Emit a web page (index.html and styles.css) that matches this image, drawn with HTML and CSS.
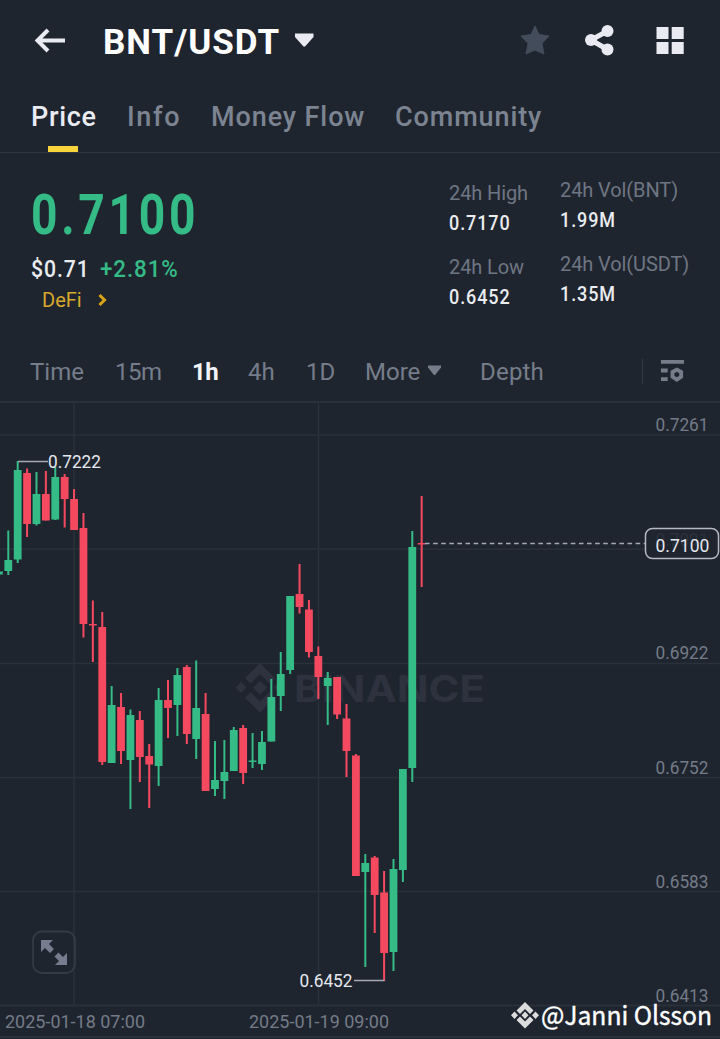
FILE: index.html
```html
<!DOCTYPE html>
<html lang="en">
  <head>
    <meta charset="UTF-8" />
    <meta name="viewport" content="width=device-width, initial-scale=1.0" />
    <title>BNT/USDT</title>
    <link rel="stylesheet" href="styles.css" />
  </head>
  <body>
    <header class="topbar">
      <svg class="back" width="32" height="26" viewBox="0 0 32 26">
        <path d="M14 2 L3.500 12.500 L14 23 M4 12.500 H31" />
      </svg>
      <h1 class="pair"><span>BNT/USDT</span></h1>
      <svg class="caret" width="19" height="15" viewBox="0 0 19 15">
        <path d="M0 .5H18.500V4L10.500 13Q9.250 14.500 8 13L0 4Z" />
      </svg>
      <div class="actions">
        <svg width="32" height="32" viewBox="0 0 32 32">
          <path class="star" d="M15 1l4 8.500 10 1.500-7 7.500 2 10.500L15 25 6 29l2-10.500L1 11 11 9.500z" />
        </svg>
        <svg width="30" height="32" viewBox="0 0 30 32">
          <path class="link" d="M22.500 6 L6 15 L22.500 24.500" />
          <g class="light">
            <circle cx="6" cy="15" r="6" />
            <circle cx="22.500" cy="6" r="6" />
            <circle cx="22.500" cy="24.500" r="6" />
          </g>
        </svg>
        <svg width="28" height="28" viewBox="0 0 28 28">
          <path class="light" d="M.5 0h12v12H.5zM15.700 0h12v12h-12zM.5 15h12v12H.5zM15.700 15h12v12h-12z" />
        </svg>
      </div>
    </header>

    <nav class="tabs">
      <a class="tab active">Price</a>
      <a class="tab info">Info</a>
      <a class="tab flow">Money Flow</a>
      <a class="tab community">Community</a>
    </nav>

    <section class="ticker">
      <div class="quote">
        <div class="last"><span>0.7100</span></div>
        <div class="change"><b>$0.71</b><span>+2.81%</span></div>
        <div class="tag">
          DeFi
          <svg width="9" height="14" viewBox="0 0 9 14"><path d="M1.500 2l5 5-5 5" /></svg>
        </div>
      </div>
      <dl class="stats">
        <div><dt>24h High</dt><dd>0.7170</dd></div>
        <div><dt>24h Low</dt><dd>0.6452</dd></div>
      </dl>
      <dl class="stats volume">
        <div><dt>24h Vol(BNT)</dt><dd>1.99M</dd></div>
        <div><dt>24h Vol(USDT)</dt><dd>1.35M</dd></div>
      </dl>
    </section>

    <nav class="intervals">
      <a class="time">Time</a>
      <a class="m15">15m</a>
      <a class="h1 active">1h</a>
      <a class="h4">4h</a>
      <a class="d1">1D</a>
      <a class="more">More <svg width="13" height="11" viewBox="0 0 13 11"><path d="M0 .5h13v2L7.500 9.500q-1 1-2 0L0 2.500z" /></svg></a>
      <a class="depth">Depth</a>
      <svg class="settings" width="26" height="26" viewBox="0 0 26 26">
        <path class="fill" d="M1 1h24v4H1zM1 10h7v4H1zM1 19h7v4H1z" />
        <path class="nut" d="M17.500 11l4.500 2.500v5L17.500 21.500l-4.500-3v-5z" />
      </svg>
    </nav>

    <main class="chart">
      <svg id="chart" width="720" height="638" viewBox="0 401 720 638">
        <g class="grid">
          <path class="edge" d="M0 402H720M0 1005.500H720M0 1037H720" />
          <path d="M0 435H720M0 549H720M0 663.500H720M0 777.500H720M0 891.500H720" />
          <path d="M74 402V1005M318.500 402V1005" />
        </g>
        <g class="watermark">
          <path d="M260 663l15 15-5.500 5.500L260 674l-9.500 9.500L245 678zM260 712.500l15-15-5.500-5.500L260 701.500l-9.500-9.500-5.500 5.500zM241 682l5.500 5.500L241 693l-5.500-5.500zM279 682l5.500 5.500L279 693l-5.500-5.500zM260 681l7 6.700-7 6.700-7-6.700z" />
          <text x="294" y="701.500" textLength="191" lengthAdjust="spacingAndGlyphs">BINANCE</text>
        </g>
        <g id="candles"></g>
        <path class="pointer" d="M18 461.500H48M354 980.500H384.500" />
        <path class="current" d="M425 543.500H645" />
        <g class="axis">
          <text x="655.500" y="431" textLength="53" lengthAdjust="spacingAndGlyphs">0.7261</text>
          <text x="655.500" y="659" textLength="53" lengthAdjust="spacingAndGlyphs">0.6922</text>
          <text x="655.500" y="774" textLength="53" lengthAdjust="spacingAndGlyphs">0.6752</text>
          <text x="655.500" y="888" textLength="53" lengthAdjust="spacingAndGlyphs">0.6583</text>
          <text x="655.500" y="1002" textLength="53" lengthAdjust="spacingAndGlyphs">0.6413</text>
          <text x="5" y="1028" textLength="140" lengthAdjust="spacingAndGlyphs">2025-01-18 07:00</text>
          <text x="249" y="1028" textLength="140" lengthAdjust="spacingAndGlyphs">2025-01-19 09:00</text>
        </g>
        <rect class="price-box" x="645.500" y="528.500" width="73" height="30" rx="7" />
        <text class="covered" x="655.500" y="545.500" textLength="53" lengthAdjust="spacingAndGlyphs">0.7091</text>
        <g class="marks">
          <text x="48" y="468" textLength="53" lengthAdjust="spacingAndGlyphs">0.7222</text>
          <text x="299.500" y="987" textLength="53" lengthAdjust="spacingAndGlyphs">0.6452</text>
          <text x="655.500" y="552" textLength="54" lengthAdjust="spacingAndGlyphs">0.7100</text>
        </g>
        <rect class="expand" x="33" y="931.500" width="42" height="41.500" rx="9" />
        <path class="arrows" d="M41 940h12l-4 4 5 5-4 4-5-5-4 4zM67 965H55l4-4-4.500-4.500 4-4L63 957l4-4z" />
        <g class="credit">
          <path d="M525 1002l8.500 8.500-3.500 3.500-5-5-5 5-3.500-3.500zM525 1028.500l8.500-8.500-3.500-3.500-5 5-5-5-3.500 3.500zM514.500 1011.500l3.500 3.700-3.500 3.700-3.500-3.700zM535.500 1011.500l3.500 3.700-3.500 3.700-3.500-3.700zM525 1011.500l3.500 3.700-3.500 3.700-3.500-3.700z" />
          <text x="541" y="1024.500" textLength="171" lengthAdjust="spacingAndGlyphs">@Janni Olsson</text>
        </g>
      </svg>
    </main>
    <script src="chart.js"></script>
  </body>
</html>
```
FILE: styles.css
```css
* {
  box-sizing: border-box;
}
body {
  margin: 0;
  width: 720px;
  height: 1039px;
  overflow: hidden;
  background: #1f252f;
  color: #eaecef;
  font-family: Roboto, "Liberation Sans", sans-serif;
}
svg {
  display: block;
  flex: none;
}

/* top bar */
.topbar {
  display: flex;
  align-items: center;
  height: 80px;
  padding: 1px 36px 0 34px;
}
.back {
  fill: none;
  stroke: #eaebf2;
  stroke-width: 4;
}
.pair {
  width: 178px;
  margin: 3px 0 0 37px;
  color: #fff;
  font-size: 35px;
  font-weight: 700;
  letter-spacing: 1px;
  white-space: nowrap;
}
.caret {
  margin-left: 14px;
  fill: #eaebf2;
}
.actions {
  display: flex;
  align-items: center;
  gap: 33px;
  margin-left: auto;
}
.actions svg:nth-child(3) {
  margin-left: 8px;
}
.star {
  fill: #434c5a;
  stroke: #434c5a;
  stroke-linejoin: round;
}
.light {
  fill: #eaebf2;
}
.link {
  fill: none;
  stroke: #eaebf2;
  stroke-width: 5;
}
.actions svg {
  overflow: visible;
}

/* page tabs */
.tabs {
  display: flex;
  height: 73px;
  padding-left: 31px;
  border-bottom: 1px solid #303640;
  color: #7c8491;
  font-size: 27px;
  font-weight: 500;
  letter-spacing: 0.9px;
  line-height: 74px;
  white-space: nowrap;
}
.tab {
  width: 96px;
}
.tab.active {
  display: flex;
  flex-direction: column;
  justify-content: space-between;
  color: #eaecf4;
  letter-spacing: 0.7px;
}
.tab.active::after {
  content: "";
  width: 30px;
  height: 6px;
  margin: -8px 0 0 17px;
  background: #f8d33a;
}
.info {
  width: 84px;
  letter-spacing: 1.7px;
}
.flow {
  width: 184px;
}
.community {
  width: 160px;
}

/* last price and 24h stats */
.ticker {
  display: flex;
  height: 188px;
  white-space: nowrap;
}
.quote {
  width: 449px;
  padding: 29px 0 0 31px;
}
.last {
  height: 65px;
  color: #35bb86;
  font-size: 56px;
  font-weight: 700;
  letter-spacing: 4.5px;
  line-height: 67px;
}
.last span {
  display: inline-block;
  transform: scaleX(0.825);
  transform-origin: left;
}
.change {
  display: flex;
  height: 36px;
  font-size: 24px;
  letter-spacing: 1px;
  line-height: 44px;
}
.change b,
.change span {
  width: 69px;
  font-weight: 500;
  transform: scaleX(0.885);
  transform-origin: left;
}
.change span {
  color: #35bb86;
  transform: scaleX(0.93);
}
.tag {
  display: flex;
  align-items: center;
  gap: 16px;
  height: 34px;
  padding-left: 11px;
  color: #d9a92b;
  font-size: 20px;
}
.tag svg {
  fill: none;
  stroke: #d9a317;
  stroke-width: 3;
}
.stats {
  width: 111px;
  margin: 0;
  padding-top: 25px;
  font-size: 20px;
  line-height: 31px;
}
.stats.volume {
  width: 150px;
  padding-top: 22px;
}
.stats div {
  height: 74px;
}
.stats dt {
  color: #6f7683;
  letter-spacing: -0.1px;
}
.stats dd {
  margin: 0;
  font-weight: 500;
  letter-spacing: 1px;
  line-height: 29px;
  transform: scaleX(0.9);
  transform-origin: left;
}

/* candle intervals */
.intervals {
  display: flex;
  align-items: center;
  height: 60px;
  padding: 1px 0 0 30px;
  color: #767d8a;
  font-size: 24px;
  white-space: nowrap;
}
.intervals .active {
  color: #f1f3f7;
  font-weight: 700;
}
.time {
  width: 85px;
}
.m15 {
  width: 77px;
  letter-spacing: -0.5px;
}
.h1 {
  width: 56px;
  letter-spacing: -0.5px;
}
.h4 {
  width: 58px;
}
.d1 {
  width: 59px;
}
.more {
  display: flex;
  align-items: center;
  gap: 8px;
  width: 115px;
}
.more svg {
  margin-bottom: 3px;
  fill: #767d8a;
}
.depth {
  width: 162px;
  letter-spacing: 0.2px;
}
.settings {
  width: 43px;
  height: 25px;
  padding-left: 17px;
  border-left: 1px solid #343a46;
}
.fill {
  fill: #767d8a;
}
.nut {
  fill: none;
  stroke: #767d8a;
  stroke-width: 4;
}

/* chart */
.chart {
  height: 638px;
}
.grid {
  fill: none;
  stroke: #2b313b;
  stroke-width: 1.500;
}
.edge {
  stroke-width: 2;
}
.watermark {
  fill: #2d323e;
  font: 700 37px Inter, sans-serif;
}
.up {
  fill: #35bb86;
}
.down {
  fill: #f4495f;
}
.pointer {
  stroke: #a5a9b5;
  stroke-width: 1.500;
}
.current {
  stroke: #a5a9b5;
  stroke-width: 1.500;
  stroke-dasharray: 4.600 3.500;
}
.axis {
  fill: #747b88;
  font-size: 18.500px;
}
.covered {
  fill: #2b313b;
  font-size: 18.500px;
}
.marks {
  fill: #e6e8ef;
  font-size: 18.500px;
}
.price-box {
  fill: #1f252f;
  stroke: #b4b8c2;
  stroke-width: 1.500;
}
.expand {
  fill: none;
  stroke: #343a47;
  stroke-width: 1.800;
}
.arrows {
  fill: #767d8e;
}
.credit {
  fill: #fff;
  font: 26px "Noto Sans CJK SC", sans-serif;
}
.credit text {
  stroke: #fff;
  stroke-width: 0.400;
}
.credit path {
  fill: #dcdcdc;
}
```
FILE: chart.js
```js
// high, body top, body bottom, low, direction
const candles = [
  [571, 571.5, 574.5, 574.5, 1],
  [530.5, 560, 571, 575, 1],
  [461, 470, 559.5, 563, 1],
  [468.5, 473, 524, 537, 0],
  [472, 494, 524, 525.5, 1],
  [471, 494, 520.5, 520.5, 0],
  [467, 477, 519.5, 520, 1],
  [474, 477, 499, 527.5, 0],
  [489, 499, 530, 530, 0],
  [513, 528, 624, 637.5, 0],
  [600.5, 624, 625.5, 662, 0],
  [612, 627, 762, 765, 0],
  [686, 705, 763, 763, 1],
  [693, 707, 751, 764, 0],
  [709.5, 715, 760, 809, 1],
  [711, 720, 757, 782, 0],
  [744, 756, 764.5, 808, 0],
  [688, 700, 766, 786, 1],
  [680, 700, 708, 738, 0],
  [668, 675, 705, 736, 1],
  [665, 667, 734, 744, 0],
  [660.5, 708, 739, 759, 1],
  [693, 714, 791, 791, 0],
  [741, 780, 789, 796, 1],
  [740, 772, 781, 799, 1],
  [727, 730, 771, 771, 1],
  [725, 728, 773, 784, 0],
  [733, 760.5, 762, 768, 1],
  [731, 742, 764, 770, 1],
  [679, 697, 741.5, 741.5, 1],
  [652, 674, 696, 711, 1],
  [596, 596, 670, 674, 1],
  [564, 594, 607, 613.5, 0],
  [600, 609.5, 652, 657.5, 0],
  [646.5, 656, 677, 699, 0],
  [672, 678, 686, 725, 1],
  [677, 677, 714.5, 719, 0],
  [704, 718.5, 751, 777, 0],
  [754, 755.5, 876, 876, 0],
  [854, 863, 872, 967, 1],
  [856, 857.5, 895, 933, 0],
  [871, 892.5, 953, 981, 0],
  [859, 869, 952, 971, 1],
  [769, 769, 870, 882, 1],
  [531, 547, 768, 782, 1],
  [496, 543, 544.5, 587, 0],
];

const group = document.querySelector("#candles");

function bar(x, y, width, height, name) {
  const rect = document.createElementNS("http://www.w3.org/2000/svg", "rect");
  rect.setAttribute("x", x);
  rect.setAttribute("y", y);
  rect.setAttribute("width", width);
  rect.setAttribute("height", height);
  rect.setAttribute("class", name);
  group.appendChild(rect);
}

candles.forEach(([high, top, bottom, low, up], i) => {
  const x = 9.395 * i - 1.1;
  const name = up ? "up" : "down";
  bar(x - 1, high, 2, low - high, name);
  bar(x - 3.9, top, 7.8, bottom - top, name);
});
```
